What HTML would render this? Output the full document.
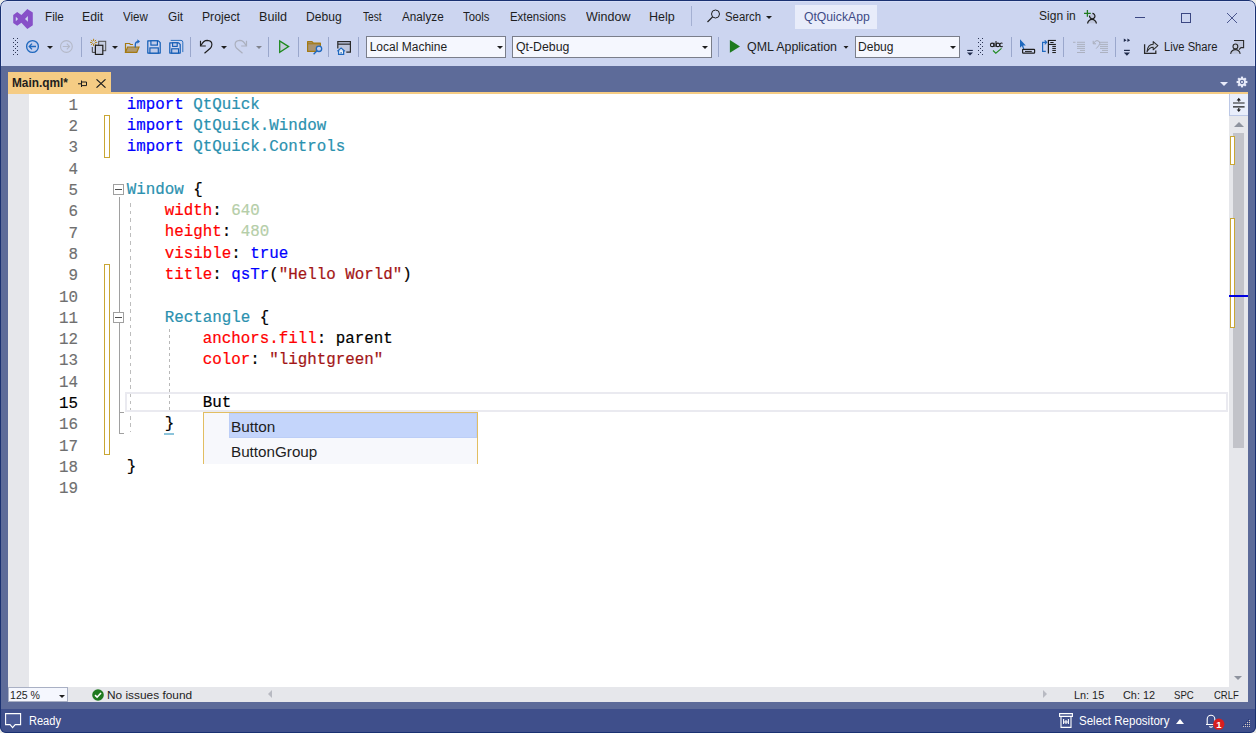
<!DOCTYPE html>
<html><head><meta charset="utf-8">
<style>
*{margin:0;padding:0;box-sizing:border-box}
html{width:1256px;height:733px;overflow:hidden;background:#ECECE8}
body{width:1256px;height:733px;overflow:hidden;background:#CCD5F0;border-radius:7px 7px 6px 6px;position:relative;font-family:"Liberation Sans",sans-serif;font-size:12px;color:#1E1E1E}
.a{position:absolute}
.L{position:absolute;white-space:pre;line-height:1;transform-origin:0 0}
.t{position:absolute;white-space:pre;line-height:1}
#frame{position:absolute;left:0;top:0;width:1256px;height:733px;border:1px solid #1A3171;border-radius:7px 7px 6px 6px;pointer-events:none}
.sep{position:absolute;width:1px;background:#A4B0D2}
.menu{position:absolute;top:11px;font-size:12px;color:#1E1E1E;white-space:pre;line-height:12px}
.combo{position:absolute;top:36px;height:22px;background:#F5F7FE;border:1px solid #7A7E8A}
.combo span{position:absolute;left:3px;top:4px;font-size:12px;white-space:pre;line-height:12px;color:#1E1E1E}
.arr{position:absolute;width:0;height:0;border-left:3px solid transparent;border-right:3px solid transparent;border-top:3px solid #1E1E1E}
.code{position:absolute;left:126.8px;-webkit-text-stroke:0.2px currentColor;font-family:"Liberation Mono",monospace;font-size:15.83px;line-height:21.3px;white-space:pre;color:#000}
.ln{position:absolute;left:30px;width:48px;text-align:right;font-family:"Liberation Mono",monospace;font-size:15.83px;line-height:21.3px;white-space:pre;color:#6F6F6F;-webkit-text-stroke:0.15px currentColor}
.cur{color:#000}
.kw{color:#0000FF}.ty{color:#2B91AF}.pr{color:#FF0000}.nu{color:#B5CEA8}.st{color:#A31515}
</style></head><body>
<div class="a" style="left:1px;top:1px;width:1254px;height:65px;border-top:1px solid #D6DEF7;border-left:1px solid #D6DEF7;border-right:1px solid #D6DEF7;border-radius:6px 6px 0 0"></div>
<!-- tab well -->
<div class="a" style="left:0;top:66px;width:1256px;height:643px;background:#5D6B99"></div>
<!-- status bar -->
<div class="a" style="left:0;top:709px;width:1256px;height:24px;background:#3F4F8B"></div>

<!-- VS logo -->
<svg class="a" style="left:8px;top:5px" width="30" height="28" viewBox="8 5 30 28">
<path fill="#8750C8" fill-rule="evenodd" d="M27.3 9 L32.8 12.6 V25.3 L27.3 28.9 L21.4 22.8 L17.2 25.8 L13.2 23 V14.9 L17.2 12.1 L21.4 15.1 Z M15.8 16.8 V21.2 L18.1 19 Z M27.9 16.1 V21.8 L25 19 Z"/>
</svg>

<!-- menus -->
<div class="sep" style="left:691px;top:6px;height:20px"></div>
<svg class="a" style="left:706px;top:9px" width="15" height="14" viewBox="0 0 15 14"><circle cx="9.5" cy="5" r="4" fill="none" stroke="#1E1E1E" stroke-width="1"/><path d="M6.6 7.9 L1.5 13" stroke="#1E1E1E" stroke-width="1.2"/></svg>
<div class="arr" style="left:766px;top:16px"></div>
<div class="a" style="left:795px;top:5px;width:82px;height:24px;background:#E8ECFA"></div>

<div class="a" style="left:1135px;top:17px;width:10px;height:1px;background:#3B4782"></div>
<div class="a" style="left:1181px;top:13px;width:10px;height:10px;border:1px solid #3B4782"></div>
<svg class="a" style="left:1226px;top:12px" width="12" height="12" viewBox="0 0 12 12"><path d="M1 1 L11 11 M11 1 L1 11" stroke="#3B4782" stroke-width="0.9"/></svg>

<svg class="a" style="left:1080px;top:6px" width="22" height="22" viewBox="1080 6 22 22">
<path d="M1087.4 9.9 V16.8 M1084 13.4 H1090.8" stroke="#1E7A1E" stroke-width="1.3"/>
<path d="M1087.8 23.3 Q1089 19.4 1092 19.4 Q1095 19.4 1096.4 23.3 Z" fill="#BFC6DC"/>
<circle cx="1092" cy="16.2" r="2.4" fill="#BFC6DC"/>
<path d="M1089.6 15.6 A2.7 2.7 0 1 0 1092.4 13.4" fill="none" stroke="#1E1E1E" stroke-width="1.2"/>
<path d="M1087.5 23.5 Q1088.6 19.3 1092 19.3 Q1095.4 19.3 1096.5 23.5" fill="none" stroke="#1E1E1E" stroke-width="1.2"/>
</svg>
<!-- toolbar -->
<div class="combo" style="left:366px;width:140px"><div class="arr" style="left:130px;top:9px"></div></div>
<div class="combo" style="left:512px;width:200px"><div class="arr" style="left:189px;top:9px"></div></div>
<div class="combo" style="left:855px;width:105px"><div class="arr" style="left:94px;top:9px"></div></div>


<svg class="a" style="left:0;top:0" width="1256" height="66" viewBox="0 0 1256 66">
<g fill="#2C3554"><rect x="13" y="38" width="1" height="1"/><rect x="17" y="38" width="1" height="1"/><rect x="15" y="40" width="1" height="1"/><rect x="13" y="42" width="1" height="1"/><rect x="17" y="42" width="1" height="1"/><rect x="15" y="44" width="1" height="1"/><rect x="13" y="46" width="1" height="1"/><rect x="17" y="46" width="1" height="1"/><rect x="15" y="48" width="1" height="1"/><rect x="13" y="50" width="1" height="1"/><rect x="17" y="50" width="1" height="1"/><rect x="15" y="52" width="1" height="1"/><rect x="13" y="54" width="1" height="1"/><rect x="17" y="54" width="1" height="1"/><rect x="978" y="38" width="1" height="1"/><rect x="982" y="38" width="1" height="1"/><rect x="980" y="40" width="1" height="1"/><rect x="978" y="42" width="1" height="1"/><rect x="982" y="42" width="1" height="1"/><rect x="980" y="44" width="1" height="1"/><rect x="978" y="46" width="1" height="1"/><rect x="982" y="46" width="1" height="1"/><rect x="980" y="48" width="1" height="1"/><rect x="978" y="50" width="1" height="1"/><rect x="982" y="50" width="1" height="1"/><rect x="980" y="52" width="1" height="1"/><rect x="978" y="54" width="1" height="1"/><rect x="982" y="54" width="1" height="1"/></g>
<!-- separators -->
<g fill="#9AA7CC">
<rect x="81" y="37" width="1" height="20"/><rect x="190" y="37" width="1" height="20"/><rect x="268" y="37" width="1" height="20"/>
<rect x="298" y="37" width="1" height="20"/><rect x="328" y="37" width="1" height="20"/><rect x="358" y="37" width="1" height="20"/>
<rect x="718" y="37" width="1" height="20"/><rect x="1011" y="37" width="1" height="20"/><rect x="1063" y="37" width="1" height="20"/><rect x="1115" y="37" width="1" height="20"/>
</g>
<!-- back -->
<circle cx="32.5" cy="46.5" r="5.9" fill="#C3CFEE" stroke="#1F68BE" stroke-width="1.3"/>
<path d="M29.3 46.5 H36 M32 43.6 L29.2 46.5 L32 49.4" fill="none" stroke="#1F68BE" stroke-width="1.3"/>
<path d="M47 46 H53 L50.0 49 Z" fill="#1E1E1E"/>
<!-- forward disabled -->
<circle cx="66.4" cy="46.5" r="5.9" fill="none" stroke="#B4B9C8" stroke-width="1.1"/>
<path d="M62.8 46.5 H69.6 M66.8 43.6 L69.6 46.5 L66.8 49.4" fill="none" stroke="#B4B9C8" stroke-width="1.1"/>
<!-- new project -->
<g stroke="#B5820E" stroke-width="1"><path d="M93.6 38.8 V46 M90 42.4 H97.2 M91.1 39.9 L96.1 44.9 M96.1 39.9 L91.1 44.9"/></g>
<circle cx="93.6" cy="42.4" r="1.4" fill="#CCD5F0"/>
<rect x="98.7" y="41.3" width="7" height="9.4" fill="#C6CEE2" stroke="#505050" stroke-width="1"/>
<path d="M92.3 47 V52.4 H95.4 M95.4 47 V52" fill="none" stroke="#404040" stroke-width="1"/>
<rect x="95.4" y="45.3" width="7.4" height="9.1" fill="#C6CDE1" stroke="#1E1E1E" stroke-width="1.2"/>
<path d="M112 46 H118 L115.0 49 Z" fill="#1E1E1E"/>
<!-- open folder -->
<path d="M125.5 52.3 V43.5 H129.5 L130.5 44.5 H133" fill="none" stroke="#A47A12" stroke-width="1.2"/>
<path d="M125.5 52.3 L127.6 47 H139 L136.8 52.3 Z" fill="#B19A6F" stroke="#A47A12" stroke-width="1.2"/>
<path d="M135.3 47.4 V44.8 Q135.3 41.6 138 41.6" fill="none" stroke="#1F68BE" stroke-width="1.3"/>
<path d="M137.4 39.2 L140 41.5 L137.4 43.8 Z" fill="#1F68BE"/>
<!-- save -->
<path d="M147.8 40.8 H158.4 L160.2 42.6 V53.1 H147.8 Z" fill="none" stroke="#0E5AB4" stroke-width="1.2" stroke-linejoin="round"/>
<rect x="150.9" y="40.8" width="6.5" height="4.3" fill="#BFCBE9" stroke="#0E5AB4" stroke-width="1.15"/>
<rect x="149.9" y="47.9" width="8.4" height="5.2" fill="#BFCBE9" stroke="#0E5AB4" stroke-width="1.15"/>
<!-- save all -->
<path d="M171.1 40.4 H181 Q182.8 40.4 182.8 42.2 V51.7" fill="none" stroke="#2A70C0" stroke-width="1" stroke-linecap="round"/>
<path d="M169.8 42.8 H178.6 L180.2 44.4 V53.1 H169.8 Z" fill="none" stroke="#0E5AB4" stroke-width="1.2" stroke-linejoin="round"/>
<rect x="172.6" y="42.8" width="4.6" height="3.6" fill="#BFCBE9" stroke="#0E5AB4" stroke-width="1.1"/>
<rect x="171.7" y="48.8" width="6.8" height="4.3" fill="#BFCBE9" stroke="#0E5AB4" stroke-width="1.1"/>
<!-- undo -->
<path d="M200.5 40.8 V46 H205.8" fill="none" stroke="#1E1E1E" stroke-width="1.15"/>
<path d="M201 45.5 Q203.5 40.4 207.2 40.4 Q211.9 40.6 211.9 44.6 Q211.9 46.6 210.3 48.3 L204.5 53.2" fill="none" stroke="#1E1E1E" stroke-width="1.15"/>
<path d="M221 46 H227 L224.0 49 Z" fill="#1E1E1E"/>
<!-- redo disabled -->
<path d="M246.5 40.8 V46 H241.2" fill="none" stroke="#ABB0BE" stroke-width="1.2"/>
<path d="M246 45.5 Q243.5 40.4 239.8 40.4 Q235.1 40.6 235.1 44.6 Q235.1 46.6 236.7 48.3 L242.5 53.2" fill="none" stroke="#ABB0BE" stroke-width="1.2"/>
<path d="M256 46 H262 L259.0 49 Z" fill="#80838D"/>
<!-- start without debugging -->
<path d="M279.7 41 V52.2 L288.6 46.6 Z" fill="#C5CCDD" stroke="#1E8A1E" stroke-width="1.3" stroke-linejoin="miter"/>
<!-- folder search -->
<path d="M307.6 41.7 H312 L313.2 43 H320.4 V47 L315.6 51.4 H307.6 Z" fill="#A99474" stroke="#A47A12" stroke-width="1.2" stroke-linejoin="round"/>
<path d="M307.6 43.8 H320.4" stroke="#A47A12" stroke-width="1"/>
<circle cx="319" cy="48.8" r="2.7" fill="#C3CFEE" stroke="#1F68BE" stroke-width="1.3"/>
<path d="M317 50.8 L313.6 54.3" stroke="#1F68BE" stroke-width="1.3"/>
<!-- window home -->
<rect x="338" y="44" width="12.4" height="8.2" fill="#BFC6DC"/>
<path d="M337.8 48.5 V41.6 H350.4 V52.2 H346.3 M337.8 44.2 H350.4" fill="none" stroke="#2A2A2A" stroke-width="1.2"/>
<path d="M337.4 51.3 L341.1 48 L344.8 51.3 M338.6 50.4 V54.4 H343.6 V50.4" fill="#fff" stroke="#1F68BE" stroke-width="1.3"/>
<rect x="340.5" y="52" width="1.2" height="1.6" fill="#1F68BE"/>
<!-- start -->
<path d="M729.9 40.1 V52.8 L740 46.45 Z" fill="#1E7A1E"/>
<path d="M843.5 46 H848.5 L846.0 48.8 Z" fill="#1E1E1E"/>
<!-- overflow -->
<rect x="967.2" y="49.9" width="5.6" height="1.1" fill="#1E2A4A"/>
<path d="M967 52.5 H973 L970.0 55.5 Z" fill="#1E2A4A"/>
<!-- spell abc -->
<g fill="none" stroke="#1E1E1E" stroke-width="1.1"><circle cx="992.2" cy="44.9" r="1.75"/><path d="M994.1 42.8 V47"/><path d="M996 41 V47"/><circle cx="997.9" cy="44.9" r="1.75"/><path d="M1002.6 43.4 A1.75 1.8 0 1 0 1002.6 46.3"/></g>
<path d="M993 50.5 L995.8 53.2 L1001.5 48.4" fill="none" stroke="#1E8A1E" stroke-width="1.1"/>
<!-- select cursor -->
<path d="M1020 39.2 V47.8 L1021.9 45.9 L1023.2 49.2 L1024.3 48.7 L1023.1 45.6 L1025.8 45.5 Z" fill="#1F68BE"/>
<rect x="1022.6" y="49.4" width="12" height="3.8" rx="0.6" fill="none" stroke="#1E1E1E" stroke-width="1.2"/>
<rect x="1025" y="50.9" width="6.8" height="1" fill="#1E1E1E"/>
<!-- format -->
<path d="M1045.6 42.3 H1042.6 V51.4 H1045.8" fill="none" stroke="#1F68BE" stroke-width="1.2"/>
<path d="M1044.6 42.3 H1046.4 M1044.7 40.4 L1046.7 42.3 L1044.7 44.3" fill="none" stroke="#1F68BE" stroke-width="1.1"/>
<path d="M1048.4 40 V53.6" stroke="#1E1E1E" stroke-width="1.2"/>
<g fill="#1E1E1E"><rect x="1048" y="39.9" width="7.9" height="1.1"/><rect x="1048" y="43.9" width="7.9" height="1.1"/><rect x="1050.3" y="42" width="3.3" height="1"/><rect x="1052.3" y="45.9" width="3.6" height="1.05"/><rect x="1052.3" y="47.9" width="3.6" height="1.05"/><rect x="1052.3" y="49.9" width="3.6" height="1.05"/><rect x="1052.3" y="52" width="3.6" height="1.05"/></g>
<!-- disabled indent -->
<g fill="#A9ADBA"><rect x="1073" y="41.8" width="2.5" height="0.9"/><rect x="1077" y="41.8" width="8" height="0.9"/><rect x="1077" y="43.9" width="8" height="0.9"/><rect x="1077" y="45.9" width="8" height="0.9"/><rect x="1077" y="47.9" width="8" height="0.9"/><rect x="1080" y="49.9" width="5" height="0.9"/><rect x="1077" y="52" width="8" height="0.9"/></g>
<g fill="#A9ADBA"><rect x="1100" y="41.8" width="8" height="0.9"/><rect x="1100" y="43.9" width="8" height="0.9"/><rect x="1100" y="45.9" width="8" height="0.9"/><rect x="1100" y="47.9" width="8" height="0.9"/><rect x="1102" y="49.9" width="6" height="0.9"/><rect x="1100" y="52" width="8" height="0.9"/></g>
<path d="M1093.2 40.8 V43.8 H1096 M1093.6 43.4 Q1095 40.6 1097 40.6 Q1100 40.8 1099.8 43.4 Q1099.4 45.5 1096.2 48.6" fill="none" stroke="#A9ADBA" stroke-width="1"/>
<!-- overflow 2 -->
<path d="M1123.8 38.4 L1126.6 40.2 L1123.8 42 Z M1127.4 38.4 L1130.2 40.2 L1127.4 42 Z" fill="#1E2A4A"/>
<rect x="1124" y="49.8" width="5.8" height="1.2" fill="#1E2A4A"/>
<path d="M1123.8 52.6 H1130.0 L1126.8999999999999 55.800000000000004 Z" fill="#1E2A4A"/>
<!-- live share -->
<path d="M1144.6 44.2 V53.3 H1155.8 V50.6" fill="none" stroke="#2A2A2A" stroke-width="1.3"/>
<path d="M1147 51.8 C1147.4 46.8 1149.8 44.3 1153.2 44.3 V41.6 L1157.9 45.7 L1153.2 49.8 V47.3 C1150.6 47.3 1148.6 48.8 1147 51.8 Z" fill="#C5CCDF" stroke="#2A2A2A" stroke-width="1.05" stroke-linejoin="round"/>
<!-- feedback -->
<path d="M1234 40.5 H1243.6 V47.6 H1241 L1239 49.6" fill="#BFC6DC" stroke="#2A2A2A" stroke-width="1.1"/>
<circle cx="1235.4" cy="46.4" r="2.4" fill="#C5CCDF" stroke="#2A2A2A" stroke-width="1.1"/>
<path d="M1230.6 53.8 Q1231.5 49.6 1235.4 49.6 Q1239.3 49.6 1240.2 53.8" fill="#BFC6DC" stroke="#2A2A2A" stroke-width="1.1"/>
</svg>
<!-- tab -->
<div class="a" style="left:8px;top:72px;width:103px;height:22px;background:#F5CC84"></div>
<div class="a" style="left:8px;top:92px;width:1240px;height:2px;background:#F5CC84"></div>

<!-- editor -->
<div class="a" style="left:8px;top:94px;width:1240px;height:593px;background:#fff"></div>
<div class="a" style="left:8px;top:94px;width:21px;height:593px;background:#E6E7EB"></div>
<!-- scrollbar -->
<div class="a" style="left:1229px;top:94px;width:19px;height:593px;background:#E6E7EB"></div>
<!-- bottom bar -->
<div class="a" style="left:8px;top:687px;width:1240px;height:15px;background:#E6E7EB"></div>


<!-- change bars -->
<div class="a" style="left:104px;top:115px;width:6px;height:43px;border:1px solid #C9A633;background:#fff"></div>
<div class="a" style="left:104px;top:264px;width:6px;height:191px;border:1px solid #C9A633;background:#fff"></div>
<!-- fold markers -->
<div class="a" style="left:113px;top:184px;width:11px;height:11px;border:1px solid #A0A0A0;background:#fff"></div>
<div class="a" style="left:115px;top:189px;width:7px;height:1px;background:#505050"></div>
<div class="a" style="left:113px;top:312px;width:11px;height:11px;border:1px solid #A0A0A0;background:#fff"></div>
<div class="a" style="left:115px;top:317px;width:7px;height:1px;background:#505050"></div>
<div class="a" style="left:119px;top:197px;width:1px;height:115px;background:#A0A0A0"></div>
<div class="a" style="left:119px;top:323px;width:1px;height:111px;background:#A0A0A0"></div>
<div class="a" style="left:119px;top:412px;width:5px;height:1px;background:#A0A0A0"></div>
<div class="a" style="left:119px;top:433px;width:5px;height:1px;background:#A0A0A0"></div>
<!-- indent guides -->
<div class="a" style="left:130px;top:202.7px;width:1px;height:229px;background:repeating-linear-gradient(#BDBDBD 0 3.8px,transparent 3.8px 7.6px)"></div>
<div class="a" style="left:169px;top:329px;width:1px;height:81px;background:repeating-linear-gradient(#B8B8B8 0 3px,transparent 3px 6px)"></div>
<!-- current line -->
<div class="a" style="left:125px;top:392px;width:1103px;height:20px;border:2px solid #EAEAF0"></div>
<!-- brace underline -->
<div class="a" style="left:164px;top:433px;width:10px;height:2px;background:#8CC4DB"></div>

<!-- scrollbar details -->
<div class="a" style="left:1229px;top:94px;width:19px;height:22px;background:#E9EEFB;border-left:1px solid #BCC8E6;border-bottom:1px solid #BCC8E6"></div>
<svg class="a" style="left:1232px;top:96px" width="14" height="17" viewBox="0 0 14 17"><path d="M1 7 H12.6 M1 10.8 H12.6 M6.8 3.5 V5.8 M6.8 12 V14.3" stroke="#1E1E1E" stroke-width="1.2"/><path d="M4.6 4.4 L6.8 1.8 L9 4.4 Z M4.6 13.4 L6.8 16 L9 13.4 Z" fill="#1E1E1E"/></svg>
<div class="a" style="left:1234px;top:122px;width:0;height:0;border-left:5px solid transparent;border-right:5px solid transparent;border-bottom:5px solid #8E939E"></div>
<div class="a" style="left:1233px;top:133px;width:11px;height:315px;background:#C2C3C9"></div>
<div class="a" style="left:1230px;top:136px;width:5px;height:29px;border:1px solid #C9A633;background:#fff"></div>
<div class="a" style="left:1230px;top:218px;width:5px;height:110px;border:1px solid #C9A633;background:#fff"></div>
<div class="a" style="left:1229px;top:295px;width:19px;height:2px;background:#0000E0"></div>
<div class="a" style="left:1234px;top:676px;width:0;height:0;border-left:4px solid transparent;border-right:4px solid transparent;border-top:4px solid #8E939E"></div>
<!-- bottom bar -->
<div class="a" style="left:8px;top:687px;width:60px;height:15px;background:#F5F7FE;border:1px solid #A9B0C4"></div>
<div class="arr" style="left:59px;top:694.5px"></div>
<svg class="a" style="left:92px;top:689px" width="12" height="12" viewBox="0 0 12 12"><circle cx="6" cy="6" r="5.8" fill="#1F7A1F"/><path d="M3 6.2 L5.1 8.2 L9 4" stroke="#fff" stroke-width="1.6" fill="none"/></svg>
<div class="a" style="left:268px;top:690px;width:0;height:0;border-top:4px solid transparent;border-bottom:4px solid transparent;border-right:4px solid #B8BAC2"></div>
<div class="a" style="left:1043px;top:690px;width:0;height:0;border-top:4px solid transparent;border-bottom:4px solid transparent;border-left:4px solid #B8BAC2"></div>
<!-- status bar -->
<svg class="a" style="left:5px;top:713px" width="17" height="16" viewBox="0 0 17 16"><path d="M0.6 0.6 H15.6 V11.6 H10.2 L7.6 14.6 L5 11.6 H0.6 Z" fill="#4A5A96" stroke="#fff" stroke-width="1.1"/></svg>
<svg class="a" style="left:1059px;top:713px" width="14" height="15" viewBox="0 0 14 15"><path d="M0.6 0.6 H13.4 V3.4 H0.6 Z M2 3.4 V14.4 H12 V3.4" fill="none" stroke="#fff" stroke-width="1.1"/><path d="M4.6 6 V11 M9.4 6 V11 M4.6 9 H9.4 M7 7 V11" stroke="#fff" stroke-width="1.1"/></svg>
<div class="a" style="left:1176px;top:719px;width:0;height:0;border-left:4px solid transparent;border-right:4px solid transparent;border-bottom:5px solid #fff"></div>
<svg class="a" style="left:1205px;top:712px" width="20" height="18" viewBox="0 0 20 18"><path d="M1 12.5 H11 M2.2 12.5 V7 A3.8 3.8 0 0 1 9.8 7 V12.5 M4.5 14.2 A1.6 1.6 0 0 0 7.5 14.2" fill="none" stroke="#fff" stroke-width="1.1"/><circle cx="13.8" cy="12.2" r="5.6" fill="#D81E1E"/><text x="13.8" y="15.7" font-size="9.5" font-family="Liberation Sans" font-weight="bold" fill="#fff" text-anchor="middle">1</text></svg>
<svg class="a" style="left:1240px;top:716px" width="14" height="14" viewBox="1240 716 14 14"><rect x="1248" y="719" width="1" height="1" fill="#2A3A78"/><rect x="1249" y="720" width="1" height="1" fill="#D8CCC4"/><rect x="1248" y="721" width="1" height="1" fill="#2A3A78"/><rect x="1249" y="722" width="1" height="1" fill="#D8CCC4"/><rect x="1246" y="721" width="1" height="1" fill="#2A3A78"/><rect x="1247" y="722" width="1" height="1" fill="#D8CCC4"/><rect x="1248" y="723" width="1" height="1" fill="#2A3A78"/><rect x="1249" y="724" width="1" height="1" fill="#D8CCC4"/><rect x="1246" y="723" width="1" height="1" fill="#2A3A78"/><rect x="1247" y="724" width="1" height="1" fill="#D8CCC4"/><rect x="1244" y="723" width="1" height="1" fill="#2A3A78"/><rect x="1245" y="724" width="1" height="1" fill="#D8CCC4"/><rect x="1248" y="725" width="1" height="1" fill="#2A3A78"/><rect x="1249" y="726" width="1" height="1" fill="#D8CCC4"/><rect x="1246" y="725" width="1" height="1" fill="#2A3A78"/><rect x="1247" y="726" width="1" height="1" fill="#D8CCC4"/><rect x="1244" y="725" width="1" height="1" fill="#2A3A78"/><rect x="1245" y="726" width="1" height="1" fill="#D8CCC4"/><rect x="1242" y="725" width="1" height="1" fill="#2A3A78"/><rect x="1243" y="726" width="1" height="1" fill="#D8CCC4"/></svg>
<!-- tab icons -->
<svg class="a" style="left:78px;top:80px" width="10" height="8" viewBox="0 0 10 8"><path d="M0 3.8 H3.5 M3.5 0.5 V7 M3.5 2 H8.5 V5.6 H3.5" fill="none" stroke="#1E1E1E" stroke-width="1"/></svg>
<svg class="a" style="left:96px;top:79px" width="10" height="9" viewBox="0 0 10 9"><path d="M0.5 0.3 L9.5 8.7 M9.5 0.3 L0.5 8.7" stroke="#1E1E1E" stroke-width="1.1"/></svg>
<div class="a" style="left:1220px;top:82px;width:0;height:0;border-left:4px solid transparent;border-right:4px solid transparent;border-top:4px solid #E8EBFA"></div>
<svg class="a" style="left:1236px;top:76px" width="12" height="12" viewBox="0 0 12 12"><g fill="#E8EBFA" transform="translate(6 6)"><circle r="3.9"/><rect x="-1.1" y="-5.4" width="2.2" height="10.8"/><rect x="-1.1" y="-5.4" width="2.2" height="10.8" transform="rotate(45)"/><rect x="-1.1" y="-5.4" width="2.2" height="10.8" transform="rotate(90)"/><rect x="-1.1" y="-5.4" width="2.2" height="10.8" transform="rotate(135)"/></g><circle cx="6" cy="6" r="1.6" fill="none" stroke="#5D6B99" stroke-width="1.1"/></svg>
<!-- code -->
<div class="code" style="top:94.5px"><span class="kw">import</span> <span class="ty">QtQuick</span></div>
<div class="ln" style="top:95.8px">1</div>
<div class="code" style="top:115.8px"><span class="kw">import</span> <span class="ty">QtQuick.Window</span></div>
<div class="ln" style="top:117.1px">2</div>
<div class="code" style="top:137.1px"><span class="kw">import</span> <span class="ty">QtQuick.Controls</span></div>
<div class="ln" style="top:138.4px">3</div>
<div class="code" style="top:158.4px"></div>
<div class="ln" style="top:159.7px">4</div>
<div class="code" style="top:179.7px"><span class="ty">Window</span> {</div>
<div class="ln" style="top:181.0px">5</div>
<div class="code" style="top:201.0px">    <span class="pr">width</span>: <span class="nu">640</span></div>
<div class="ln" style="top:202.3px">6</div>
<div class="code" style="top:222.3px">    <span class="pr">height</span>: <span class="nu">480</span></div>
<div class="ln" style="top:223.6px">7</div>
<div class="code" style="top:243.6px">    <span class="pr">visible</span>: <span class="kw">true</span></div>
<div class="ln" style="top:244.9px">8</div>
<div class="code" style="top:264.9px">    <span class="pr">title</span>: <span class="kw">qsTr</span>(<span class="st">"Hello World"</span>)</div>
<div class="ln" style="top:266.2px">9</div>
<div class="code" style="top:286.2px"></div>
<div class="ln" style="top:287.5px">10</div>
<div class="code" style="top:307.5px">    <span class="ty">Rectangle</span> {</div>
<div class="ln" style="top:308.8px">11</div>
<div class="code" style="top:328.8px">        <span class="pr">anchors.fill</span>: parent</div>
<div class="ln" style="top:330.1px">12</div>
<div class="code" style="top:350.1px">        <span class="pr">color</span>: <span class="st">"lightgreen"</span></div>
<div class="ln" style="top:351.4px">13</div>
<div class="code" style="top:371.4px"></div>
<div class="ln" style="top:372.7px">14</div>
<div class="code" style="top:392.7px">        But</div>
<div class="ln cur" style="top:394.0px">15</div>
<div class="code" style="top:414.0px">    }</div>
<div class="ln" style="top:415.3px">16</div>
<div class="code" style="top:435.3px"></div>
<div class="ln" style="top:436.6px">17</div>
<div class="code" style="top:456.6px">}</div>
<div class="ln" style="top:457.9px">18</div>
<div class="code" style="top:477.9px"></div>
<div class="ln" style="top:479.2px">19</div>

<!-- completion popup -->
<div class="a" style="left:203px;top:412px;width:275px;height:52px;border:1px solid #E2BE62;border-bottom:none;background:#F7F8FC"></div>
<div class="a" style="left:229px;top:413px;width:248px;height:25px;background:#C4D5FB;border:1px solid #BCCEF7"></div>
<!--LABELS-->
<div class="L" style="left:44.63px;top:10.64px;font-size:12px;color:#1E1E1E;font-weight:normal;transform:scaleX(0.9722)">File</div>
<div class="L" style="left:82.47px;top:10.64px;font-size:12px;color:#1E1E1E;font-weight:normal;transform:scaleX(1.0263)">Edit</div>
<div class="L" style="left:123.00px;top:10.64px;font-size:12px;color:#1E1E1E;font-weight:normal;transform:scaleX(0.9615)">View</div>
<div class="L" style="left:168.25px;top:10.64px;font-size:12px;color:#1E1E1E;font-weight:normal;transform:scaleX(0.9833)">Git</div>
<div class="L" style="left:202.49px;top:10.64px;font-size:12px;color:#1E1E1E;font-weight:normal;transform:scaleX(1.0139)">Project</div>
<div class="L" style="left:259.45px;top:10.64px;font-size:12px;color:#1E1E1E;font-weight:normal;transform:scaleX(1.0500)">Build</div>
<div class="L" style="left:305.99px;top:10.64px;font-size:12px;color:#1E1E1E;font-weight:normal;transform:scaleX(1.0074)">Debug</div>
<div class="L" style="left:363.40px;top:10.64px;font-size:12px;color:#1E1E1E;font-weight:normal;transform:scaleX(0.8455)">Test</div>
<div class="L" style="left:402.00px;top:10.64px;font-size:12px;color:#1E1E1E;font-weight:normal;transform:scaleX(0.9762)">Analyze</div>
<div class="L" style="left:463.40px;top:10.64px;font-size:12px;color:#1E1E1E;font-weight:normal;transform:scaleX(0.9411)">Tools</div>
<div class="L" style="left:509.80px;top:10.64px;font-size:12px;color:#1E1E1E;font-weight:normal;transform:scaleX(0.9526)">Extensions</div>
<div class="L" style="left:586.25px;top:10.64px;font-size:12px;color:#1E1E1E;font-weight:normal;transform:scaleX(1.0407)">Window</div>
<div class="L" style="left:649.46px;top:10.64px;font-size:12px;color:#1E1E1E;font-weight:normal;transform:scaleX(1.0435)">Help</div>
<div class="L" style="left:725.05px;top:10.64px;font-size:12px;color:#1E1E1E;font-weight:normal;transform:scaleX(0.9514)">Search</div>
<div class="L" style="left:803.50px;top:10.64px;font-size:12px;color:#3D4A86;font-weight:normal;transform:scaleX(1.0156)">QtQuickApp</div>
<div class="L" style="left:1039.30px;top:9.84px;font-size:12px;color:#1E1E1E;font-weight:normal;transform:scaleX(1.0029)">Sign in</div>
<div class="L" style="left:369.70px;top:40.84px;font-size:12px;color:#1E1E1E;font-weight:normal;transform:scaleX(1.0000)">Local Machine</div>
<div class="L" style="left:516.25px;top:40.84px;font-size:12px;color:#1E1E1E;font-weight:normal;transform:scaleX(1.0245)">Qt-Debug</div>
<div class="L" style="left:747.25px;top:40.84px;font-size:12px;color:#1E1E1E;font-weight:normal;transform:scaleX(1.0349)">QML Application</div>
<div class="L" style="left:858.40px;top:40.84px;font-size:12px;color:#1E1E1E;font-weight:normal;transform:scaleX(1.0029)">Debug</div>
<div class="L" style="left:1163.67px;top:40.84px;font-size:12px;color:#1E1E1E;font-weight:normal;transform:scaleX(0.9321)">Live Share</div>
<div class="L" style="left:11.51px;top:76.84px;font-size:12px;color:#1E1E1E;font-weight:bold;transform:scaleX(0.9875)">Main.qml*</div>
<div class="L" style="left:9.64px;top:690.29px;font-size:11px;color:#1E1E1E;font-weight:normal;transform:scaleX(0.9633)">125 %</div>
<div class="L" style="left:107.27px;top:690.07px;font-size:11.5px;color:#1E1E1E;font-weight:normal;transform:scaleX(1.0321)">No issues found</div>
<div class="L" style="left:1074.31px;top:689.69px;font-size:11px;color:#1E1E1E;font-weight:normal;transform:scaleX(0.9867)">Ln: 15</div>
<div class="L" style="left:1123.20px;top:689.69px;font-size:11px;color:#1E1E1E;font-weight:normal;transform:scaleX(0.9906)">Ch: 12</div>
<div class="L" style="left:1173.83px;top:689.69px;font-size:11px;color:#1E1E1E;font-weight:normal;transform:scaleX(0.8714)">SPC</div>
<div class="L" style="left:1213.70px;top:689.69px;font-size:11px;color:#1E1E1E;font-weight:normal;transform:scaleX(0.8643)">CRLF</div>
<div class="L" style="left:28.58px;top:714.54px;font-size:12px;color:#FFFFFF;font-weight:normal;transform:scaleX(0.9206)">Ready</div>
<div class="L" style="left:1079.34px;top:714.74px;font-size:12px;color:#FFFFFF;font-weight:normal;transform:scaleX(0.9613)">Select Repository</div>
<div class="L" style="left:231.19px;top:419.63px;font-size:14.5px;color:#1E1E1E;font-weight:normal;transform:scaleX(1.0573)">Button</div>
<div class="L" style="left:231.20px;top:444.63px;font-size:14.5px;color:#1E1E1E;font-weight:normal;transform:scaleX(1.0494)">ButtonGroup</div>
<!--/LABELS-->
<div id="frame"></div>
</body></html>
